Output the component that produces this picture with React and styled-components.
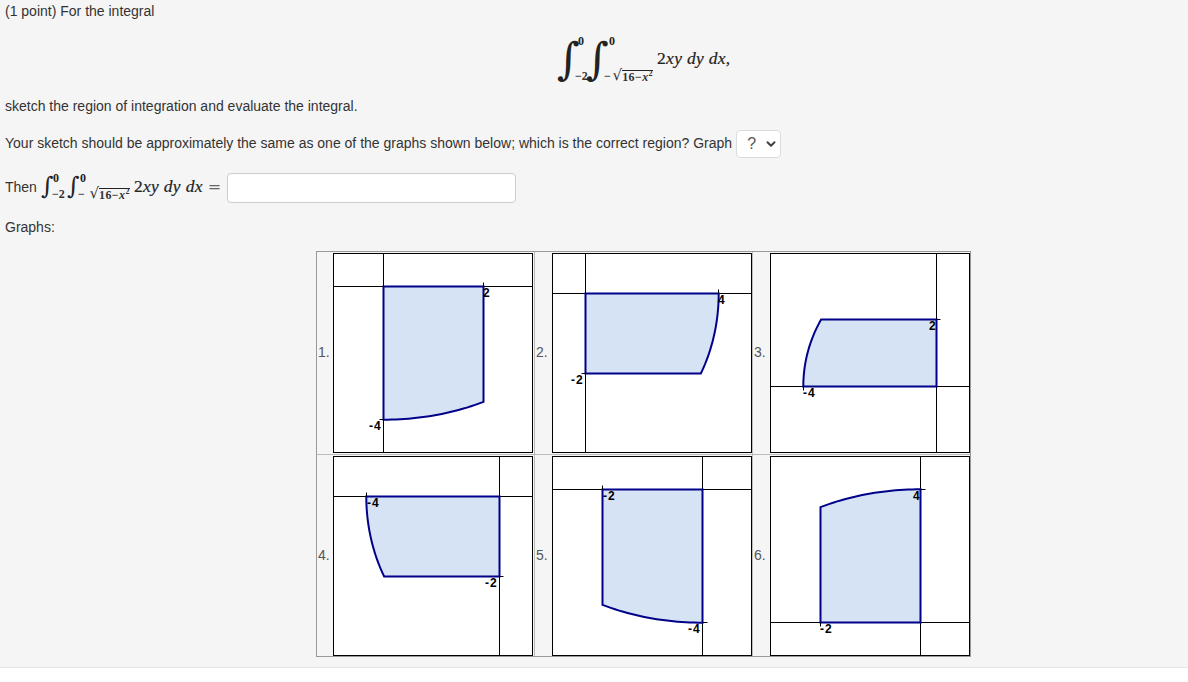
import React from "react";
import styled, { createGlobalStyle } from "styled-components";
import { ChevronDown } from "lucide-react";

const arc = (n, fn) => {
  const pts = [];
  for (let i = 0; i <= n; i++) pts.push(fn(i / n));
  return pts;
};
const root = (s) => 33.3 * Math.sqrt(16 - s * s);

const graphs = [
  {
    axisX: 50,
    axisY: 33,
    points: [[50, 33], [150, 33], ...arc(24, (u) => [150 - 100 * u, 33 + root(2 - 2 * u)])],
    ticks: [[150, 33, 150, 29], [50, 166, 46, 166]],
    labels: [["2", 150, 44], ["-4", 36, 177]],
  },
  {
    axisX: 33,
    axisY: 40,
    points: [[33, 120], [33, 40], ...arc(24, (u) => [33 + root(2 * u), 40 + 80 * u])],
    ticks: [[166, 40, 166, 36], [33, 120, 29, 120]],
    labels: [["4", 166, 51], ["-2", 19, 131]],
  },
  {
    axisX: 166,
    axisY: 133,
    points: [[166, 133], [166, 66], ...arc(24, (u) => [166 - root(2 - 2 * u), 66 + 67 * u])],
    ticks: [[166, 66, 170, 66], [33, 133, 33, 137]],
    labels: [["2", 159, 77], ["-4", 33, 144]],
  },
  {
    axisX: 166,
    axisY: 40,
    points: [[166, 120], [166, 40], ...arc(24, (u) => [166 - root(2 * u), 40 + 80 * u])],
    ticks: [[33, 40, 33, 36], [166, 120, 170, 120]],
    labels: [["-4", 34, 51], ["-2", 152, 131]],
  },
  {
    axisX: 150,
    axisY: 33,
    points: [[150, 33], [50, 33], ...arc(24, (u) => [50 + 100 * u, 33 + root(2 - 2 * u)])],
    ticks: [[50, 33, 50, 29], [150, 166, 155, 166]],
    labels: [["-2", 51, 44], ["-4", 136, 177]],
  },
  {
    axisX: 150,
    axisY: 166,
    points: [[150, 166], [50, 166], ...arc(24, (u) => [50 + 100 * u, 166 - root(2 - 2 * u)])],
    ticks: [[150, 33, 155, 33], [50, 166, 50, 170]],
    labels: [["4", 143, 44], ["-2", 50, 177]],
  },
];

const Graph = ({ g }) => (
  <GraphSvg viewBox="0 0 200 200">
    <rect x="0.5" y="0.5" width="199" height="199" fill="#fff" stroke="#000" />
    <g transform="translate(0.5 0.5)">
      <line x1={g.axisX} y1="0" x2={g.axisX} y2="199" stroke="#000" />
      <line x1="0" y1={g.axisY} x2="199" y2={g.axisY} stroke="#000" />
      <polygon
        points={g.points.map((p) => p.join(",")).join(" ")}
        fill="#d5e3f4"
        stroke="#00008a"
        strokeWidth="2"
      />
      {g.ticks.map((t, i) => (
        <line key={i} x1={t[0]} y1={t[1]} x2={t[2]} y2={t[3]} stroke="#000" />
      ))}
    </g>
    {g.labels.map((l) => (
      <TickLabel key={l[0]} x={l[1]} y={l[2]}>
        {l[0]}
      </TickLabel>
    ))}
  </GraphSvg>
);

const Integrals = ({ small }) => (
  <MathLine $small={small}>
    <IntegralSign $small={small}>∫</IntegralSign>
    <Limits $width={13}>
      <Upper $pad={small ? 1 : 3}>0</Upper>
      <Lower>−2</Lower>
    </Limits>
    <IntegralSign $small={small} $gap={small ? 3 : 1}>
      ∫
    </IntegralSign>
    <Limits $width={small ? 52 : 49}>
      <Upper $pad={small ? 2 : 5}>0</Upper>
      <Lower>
        −<Radical>√</Radical>
        <Radicand>
          16−<i>x</i>
          <sup>2</sup>
        </Radicand>
      </Lower>
    </Limits>
    <Integrand>
      2<i>xy</i> <i>dy</i> <i>dx</i>
      {small ? "" : ","}
    </Integrand>
  </MathLine>
);

export default function App() {
  return (
    <Page>
      <GlobalStyle />
      <Text>(1 point) For the integral</Text>
      <DisplayMath>
        <Integrals />
      </DisplayMath>
      <Text>sketch the region of integration and evaluate the integral.</Text>
      <QuestionRow>
        <RowText>
          Your sketch should be approximately the same as one of the graphs shown below; which is the correct region? Graph
        </RowText>
        <Select>
          ?
          <ChevronDown size={14} strokeWidth={3.5} color="#444" />
        </Select>
      </QuestionRow>
      <AnswerRow>
        <RowText>Then</RowText>
        <Integrals small />
        <Equals>=</Equals>
        <AnswerInput />
      </AnswerRow>
      <GraphsTitle>Graphs:</GraphsTitle>
      <GraphTable>
        {graphs.map((g, i) => (
          <Cell key={i} $first={i % 3 === 0} $last={i % 3 === 2} $bottom={i > 2}>
            <CellNumber>{i + 1}.</CellNumber>
            <Graph g={g} />
          </Cell>
        ))}
      </GraphTable>
    </Page>
  );
}

const GlobalStyle = createGlobalStyle`
  html, body {
    margin: 0;
    background: #fff;
  }
`;

const Page = styled.div`
  box-sizing: border-box;
  height: 668px;
  padding: 3px 5px 0;
  background: #f5f5f5;
  border-bottom: 1px solid #e6e6e6;
  font-family: "Liberation Sans", Arial, sans-serif;
  font-size: 14px;
  color: #333;
`;

const Text = styled.div`
  height: 16px;
  line-height: 16px;
`;

const RowText = styled.span`
  margin-bottom: 2px;
`;

const DisplayMath = styled.div`
  display: flex;
  height: 79px;
  padding-left: 555px;
  align-items: center;
`;

const MathLine = styled.span`
  display: inline-flex;
  align-items: center;
  height: ${(p) => (p.$small ? "29px" : "48px")};
  margin-bottom: ${(p) => (p.$small ? "4px" : "0")};
  font-family: "Liberation Serif", "DejaVu Serif", serif;
  color: #222;
`;

const IntegralSign = styled.span`
  font-family: "DejaVu Serif", serif;
  font-size: ${(p) => (p.$small ? "24px" : "44px")};
  letter-spacing: -0.18em;
  line-height: 1;
  width: ${(p) => (p.$small ? "10px" : "15px")};
  margin-left: ${(p) => p.$gap || 0}px;
  transform: translateX(${(p) => (p.$small ? "-1px" : "-3px")});
`;

const Limits = styled.span`
  display: flex;
  flex-direction: column;
  justify-content: space-between;
  align-self: stretch;
  font-size: 12px;
  font-weight: bold;
  line-height: 13px;
  width: ${(p) => p.$width}px;
  white-space: nowrap;
`;

const Upper = styled.span`
  padding-left: ${(p) => p.$pad}px;
`;

const Lower = styled.span`
  display: flex;
  align-items: flex-end;
  color: #333;
`;

const Radical = styled.span`
  margin-left: auto;
  font-family: "DejaVu Sans", sans-serif;
  font-size: 15px;
  font-weight: normal;
  line-height: 15px;
`;

const Radicand = styled.span`
  border-top: 1px solid #222;
  line-height: 12px;
  letter-spacing: 0.4px;

  sup {
    font-size: 8px;
    line-height: 0;
  }
`;

const Integrand = styled.span`
  font-size: 17.5px;
  margin-left: 4px;
  white-space: pre;
  letter-spacing: 0.3px;
  -webkit-text-stroke: 0.2px #222;
`;

const QuestionRow = styled.div`
  display: flex;
  align-items: center;
  gap: 4px;
  height: 28px;
  margin-top: 16px;
`;

const Select = styled.div`
  box-sizing: border-box;
  width: 45px;
  height: 28px;
  display: flex;
  align-items: center;
  justify-content: space-between;
  padding: 0 2px 0 10px;
  background: #fff;
  border: 1px solid #dcdcdc;
  border-radius: 4px;
  font-size: 16px;
  color: #555;
`;

const AnswerRow = styled.div`
  display: flex;
  align-items: center;
  height: 30px;
  margin-top: 15px;
  gap: 5px;
`;

const Equals = styled.span`
  font-family: "DejaVu Serif", serif;
  font-size: 16px;
  margin-bottom: 4px;
  color: #666;
`;

const AnswerInput = styled.input`
  box-sizing: border-box;
  width: 289px;
  height: 30px;
  margin-left: 1px;
  background: #fff;
  border: 1px solid #ccc;
  border-radius: 4px;
`;

const GraphsTitle = styled.div`
  height: 16px;
  line-height: 16px;
  margin-top: 16px;
`;

const GraphTable = styled.div`
  display: grid;
  grid-template-columns: 218px 218px 217px;
  width: max-content;
  margin: 16px 0 0 311px;
  background: #f5f5f5;
  border: 1px solid #999;
`;

const Cell = styled.div`
  display: flex;
  align-items: center;
  justify-content: flex-end;
  box-sizing: border-box;
  padding: ${(p) => (p.$bottom ? "1px 0 0" : "1px 0")};
  padding-right: ${(p) => (p.$first ? "1px" : "0")};
  border-right: ${(p) => (p.$last ? "0" : "1px solid #bbb")};
  border-top: ${(p) => (p.$bottom ? "1px solid #bbb" : "0")};
`;

const CellNumber = styled.span`
  flex: 1;
  padding-left: 1px;
  margin-bottom: 2px;
  color: #555;
`;

const GraphSvg = styled.svg`
  display: block;
  width: 200px;
  height: 200px;
  flex: none;
`;

const TickLabel = styled.text`
  font-family: "Liberation Sans", Arial, sans-serif;
  font-size: 12px;
  font-weight: bold;
  letter-spacing: 1px;
  fill: #000;
`;
